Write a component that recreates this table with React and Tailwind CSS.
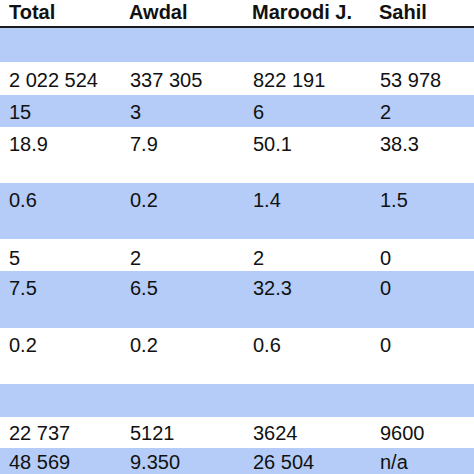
import React from "react";

const cols = "grid grid-cols-[120px_123px_127px_1fr] pl-[9px]";

const rows = [
  { h: "h-[34px]", pt: "pt-[6px]", blue: true, cells: ["", "", "", ""] },
  { h: "h-[33px]", pt: "pt-[6px]", blue: false, cells: ["2 022 524", "337 305", "822 191", "53 978"] },
  { h: "h-[32px]", pt: "pt-[5px]", blue: true, cells: ["15", "3", "6", "2"] },
  { h: "h-[56px]", pt: "pt-[5px]", blue: false, cells: ["18.9", "7.9", "50.1", "38.3"] },
  { h: "h-[56px]", pt: "pt-[5px]", blue: true, cells: ["0.6", "0.2", "1.4", "1.5"] },
  { h: "h-[32px]", pt: "pt-[7px]", blue: false, cells: ["5", "2", "2", "0"] },
  { h: "h-[57px]", pt: "pt-[5px]", blue: true, cells: ["7.5", "6.5", "32.3", "0"] },
  { h: "h-[56px]", pt: "pt-[5px]", blue: false, cells: ["0.2", "0.2", "0.6", "0"] },
  { h: "h-[33px]", pt: "pt-[5px]", blue: true, cells: ["", "", "", ""] },
  { h: "h-[31px]", pt: "pt-[4px]", blue: false, cells: ["22 737", "5121", "3624", "9600"] },
  { h: "h-[40px]", pt: "pt-[2px]", blue: true, cells: ["48 569", "9.350", "26 504", "n/a"] },
];

export default function App() {
  return (
    <div
      className="w-[474px] h-[474px] overflow-hidden bg-white text-[20px] leading-[24px] text-[#111]"
      style={{ fontFamily: '"Liberation Sans", Arial, sans-serif' }}
    >
      <div className={`${cols} h-[28px] border-b-2 border-[#1c1c1c] font-bold`}>
        <div>Total</div>
        <div>Awdal</div>
        <div>Maroodi J.</div>
        <div>Sahil</div>
      </div>
      {rows.map((r, i) => (
        <div
          key={i}
          className={`${cols} ${r.h} ${r.pt} ${r.blue ? "bg-[#b4ccf7]" : "bg-white"}`}
        >
          {r.cells.map((c, j) => (
            <div key={j} className={j > 0 ? "pl-px" : ""}>
              {c}
            </div>
          ))}
        </div>
      ))}
    </div>
  );
}
